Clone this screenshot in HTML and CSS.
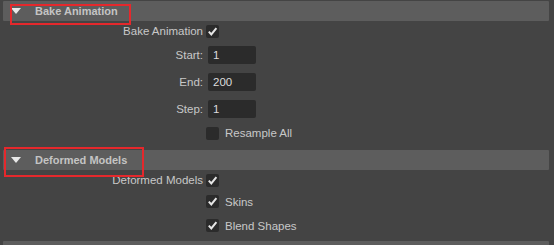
FILE: index.html
```html
<!DOCTYPE html>
<html>
<head>
<meta charset="utf-8">
<link rel="stylesheet" href="styles.css">
</head>
<body>
<div class="panel">
  <div class="section-header">
    <span class="tri"></span>
    <span class="title">Bake Animation</span>
    <span class="mark mark-1"></span>
  </div>
  <div class="section-body s1">
    <div class="row r-check">
      <span class="label">Bake Animation</span>
      <span class="cb on"><svg viewBox="0 0 13 13" width="13" height="13"><polyline points="2.8,6.6 5.3,9.4 10.4,3.2" fill="none" stroke="#e6e6e6" stroke-width="2"/></svg></span>
    </div>
    <div class="row r-field">
      <span class="label">Start:</span>
      <span class="field">1</span>
    </div>
    <div class="row r-field">
      <span class="label">End:</span>
      <span class="field">200</span>
    </div>
    <div class="row r-field">
      <span class="label">Step:</span>
      <span class="field">1</span>
    </div>
    <div class="row r-last">
      <span class="label"></span>
      <span class="cb"></span>
      <span class="text">Resample All</span>
    </div>
  </div>
  <div class="section-header">
    <span class="tri"></span>
    <span class="title">Deformed Models</span>
    <span class="mark mark-2"></span>
  </div>
  <div class="section-body s2">
    <div class="row r-check">
      <span class="label">Deformed Models</span>
      <span class="cb on"><svg viewBox="0 0 13 13" width="13" height="13"><polyline points="2.8,6.6 5.3,9.4 10.4,3.2" fill="none" stroke="#e6e6e6" stroke-width="2"/></svg></span>
    </div>
    <div class="row r-sub1">
      <span class="label"></span>
      <span class="cb on"><svg viewBox="0 0 13 13" width="13" height="13"><polyline points="2.8,6.6 5.3,9.4 10.4,3.2" fill="none" stroke="#e6e6e6" stroke-width="2"/></svg></span>
      <span class="text">Skins</span>
    </div>
    <div class="row r-sub2">
      <span class="label"></span>
      <span class="cb on"><svg viewBox="0 0 13 13" width="13" height="13"><polyline points="2.8,6.6 5.3,9.4 10.4,3.2" fill="none" stroke="#e6e6e6" stroke-width="2"/></svg></span>
      <span class="text">Blend Shapes</span>
    </div>
  </div>
  <div class="section-header next"></div>
</div>
</body>
</html>
```
FILE: styles.css
```css
html, body {
  margin: 0;
  padding: 0;
  background: #444444;
  width: 554px;
  height: 245px;
  overflow: hidden;
}
.panel {
  padding: 1px 5px 0 3px;
  font-family: "Liberation Sans", Arial, sans-serif;
  font-size: 11.5px;
  color: #c8c8c8;
}
.section-header {
  position: relative;
  height: 20px;
  background: #5d5d5d;
  display: flex;
  align-items: center;
  padding-left: 8px;
  border-radius: 1px;
}
.tri {
  width: 0;
  height: 0;
  border-left: 5px solid transparent;
  border-right: 5px solid transparent;
  border-top: 6px solid #e8e8e8;
  margin-right: 14px;
}
.title {
  font-weight: bold;
  font-size: 11px;
  color: #c4c4c4;
}
.mark {
  position: absolute;
  border: 2px solid #e5282c;
  box-sizing: border-box;
}
.mark-1 {
  left: 7px;
  top: 3px;
  width: 121px;
  height: 21px;
}
.mark-2 {
  left: 1px;
  top: -3px;
  width: 140px;
  height: 30px;
}
.section-body {
  display: flex;
  flex-direction: column;
}
.s1 { padding-bottom: 6px; }
.s2 { padding-bottom: 3px; }
.row {
  display: flex;
  align-items: center;
}
.r-check { height: 20px; }
.r-field { height: 27px; }
.r-last { height: 22px; }
.r-sub1 { height: 23px; }
.r-sub2 { height: 25px; }
.label {
  width: 200px;
  text-align: right;
  margin-right: 3px;
  white-space: nowrap;
}
.cb {
  width: 13px;
  height: 13px;
  background: #2b2b2b;
  border-radius: 2px;
  display: block;
}
.cb svg { display: block; }
.text {
  margin-left: 6px;
}
.field {
  width: 43px;
  height: 18px;
  margin-left: 2px;
  background: #2b2b2b;
  border-radius: 2px;
  padding-left: 5px;
  line-height: 18px;
  color: #dcdcdc;
}
.next {
  height: 10px;
}
```
